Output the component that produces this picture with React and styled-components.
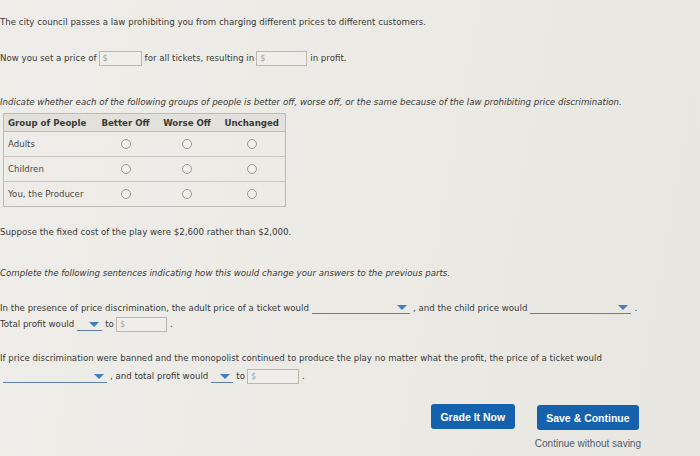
import React from "react";
import styled, { createGlobalStyle } from "styled-components";

const GlobalStyle = createGlobalStyle`
  html, body {
    margin: 0;
    padding: 0;
    background: #ebeae5;
  }
  body {
    font-family: "DejaVu Sans", Verdana, sans-serif;
    font-size: 8.65px;
    color: #3a3a38;
  }
`;

const Page = styled.div`
  width: 700px;
  height: 456px;
  box-sizing: border-box;
  padding: 16px 0 0 0;
  background: linear-gradient(100deg, #eeede9 0%, #ebeae5 55%, #e7e6e1 100%);
  overflow: hidden;
`;

const Line = styled.div`
  display: flex;
  align-items: center;
  flex-wrap: nowrap;
  white-space: pre;
  height: ${(p) => p.h || 12}px;
  margin-top: ${(p) => p.mt || 0}px;
  font-style: ${(p) => (p.italic ? "italic" : "normal")};
`;

const Money = styled.span`
  display: inline-flex;
  align-items: center;
  box-sizing: border-box;
  width: ${(p) => p.w}px;
  height: 15px;
  margin: 0 ${(p) => p.mr || 3}px 0 ${(p) => p.ml || 2}px;
  padding-left: 3px;
  border: 1px solid #b8b8b3;
  background: #efeeea;
  color: #9aa6b0;
  font-size: 8px;
`;

const Select = styled.span`
  display: inline-flex;
  justify-content: flex-end;
  align-items: center;
  box-sizing: border-box;
  width: ${(p) => p.w}px;
  height: 12px;
  margin: 0 ${(p) => p.mr || 3}px 1px ${(p) => p.ml || 3}px;
  padding-right: 3px;
  border-bottom: 1px solid #5f7fa6;
  align-self: flex-end;
`;

const Arrow = styled.span`
  width: 0;
  height: 0;
  border-left: 5px solid transparent;
  border-right: 5px solid transparent;
  border-top: 5px solid #3f7fc2;
`;

const Table = styled.table`
  margin: 5px 0 0 3px;
  border-collapse: collapse;
  table-layout: fixed;
  width: 282px;
  border: 1px solid #bcbcb7;
  font-size: 8.65px;
  th {
    background: #e2e1dc;
    font-weight: bold;
    height: 17px;
    text-align: center;
    padding: 0;
    color: #3a3a38;
    border-bottom: 1px solid #bcbcb7;
    white-space: nowrap;
  }
  th:first-child {
    text-align: left;
    padding-left: 4px;
  }
  td {
    height: 24px;
    border-top: 1px solid #c8c8c3;
    text-align: center;
    padding: 0;
  }
  td:first-child {
    text-align: left;
    padding-left: 4px;
    color: #4a4a48;
  }
`;

const Radio = styled.span`
  display: inline-block;
  width: 8px;
  height: 8px;
  border: 1px solid #9a9a96;
  border-radius: 50%;
  background: #f1f0ec;
  vertical-align: middle;
`;

const Actions = styled.div`
  display: flex;
  justify-content: flex-end;
  gap: 20px;
  padding-right: 59px;
  margin-top: 20px;
`;

const Col = styled.div`
  display: flex;
  flex-direction: column;
  align-items: center;
  gap: 8px;
`;

const Button = styled.button`
  width: ${(p) => p.w}px;
  height: 25px;
  border: none;
  border-radius: 3px;
  background: #1462ae;
  color: #ffffff;
  font-family: "Liberation Sans", Arial, sans-serif;
  font-weight: bold;
  font-size: 10.5px;
  margin-top: ${(p) => p.mt || 0}px;
`;

const Link = styled.span`
  font-family: "Liberation Sans", Arial, sans-serif;
  font-size: 10px;
  color: #4f5c6a;
`;

const rows = ["Adults", "Children", "You, the Producer"];

export default function App() {
  return (
    <Page>
      <GlobalStyle />
      <Line>The city council passes a law prohibiting you from charging different prices to different customers.</Line>
      <Line mt={22} h={16}>
        Now you set a price of<Money w={43}>$</Money>for all tickets, resulting in<Money w={51}>$</Money>in profit.
      </Line>
      <Line mt={30} italic>
        Indicate whether each of the following groups of people is better off, worse off, or the same because of the law prohibiting price discrimination.
      </Line>
      <Table>
        <colgroup>
          <col style={{ width: 92 }} />
          <col style={{ width: 60 }} />
          <col style={{ width: 63 }} />
          <col style={{ width: 67 }} />
        </colgroup>
        <thead>
          <tr>
            <th>Group of People</th>
            <th>Better Off</th>
            <th>Worse Off</th>
            <th>Unchanged</th>
          </tr>
        </thead>
        <tbody>
          {rows.map((r) => (
            <tr key={r}>
              <td>{r}</td>
              <td><Radio /></td>
              <td><Radio /></td>
              <td><Radio /></td>
            </tr>
          ))}
        </tbody>
      </Table>
      <Line mt={19}>Suppose the fixed cost of the play were $2,600 rather than $2,000.</Line>
      <Line mt={29} italic>Complete the following sentences indicating how this would change your answers to the previous parts.</Line>
      <Line mt={22} h={14}>
        In the presence of price discrimination, the adult price of a ticket would<Select w={98}><Arrow /></Select>, and the child price would<Select w={101}><Arrow /></Select>.
      </Line>
      <Line mt={1} h={16}>
        Total profit would<Select w={25}><Arrow /></Select>to<Money w={51}>$</Money>.
      </Line>
      <Line mt={20}>
        If price discrimination were banned and the monopolist continued to produce the play no matter what the profit, the price of a ticket would
      </Line>
      <Line mt={4} h={16}>
        <Select w={104} ml={0}><Arrow /></Select>, and total profit would<Select w={22}><Arrow /></Select>to<Money w={52}>$</Money>.
      </Line>
      <Actions>
        <Col>
          <Button w={84}>Grade It Now</Button>
        </Col>
        <Col>
          <Button w={102} mt={1}>Save &amp; Continue</Button>
          <Link>Continue without saving</Link>
        </Col>
      </Actions>
    </Page>
  );
}
